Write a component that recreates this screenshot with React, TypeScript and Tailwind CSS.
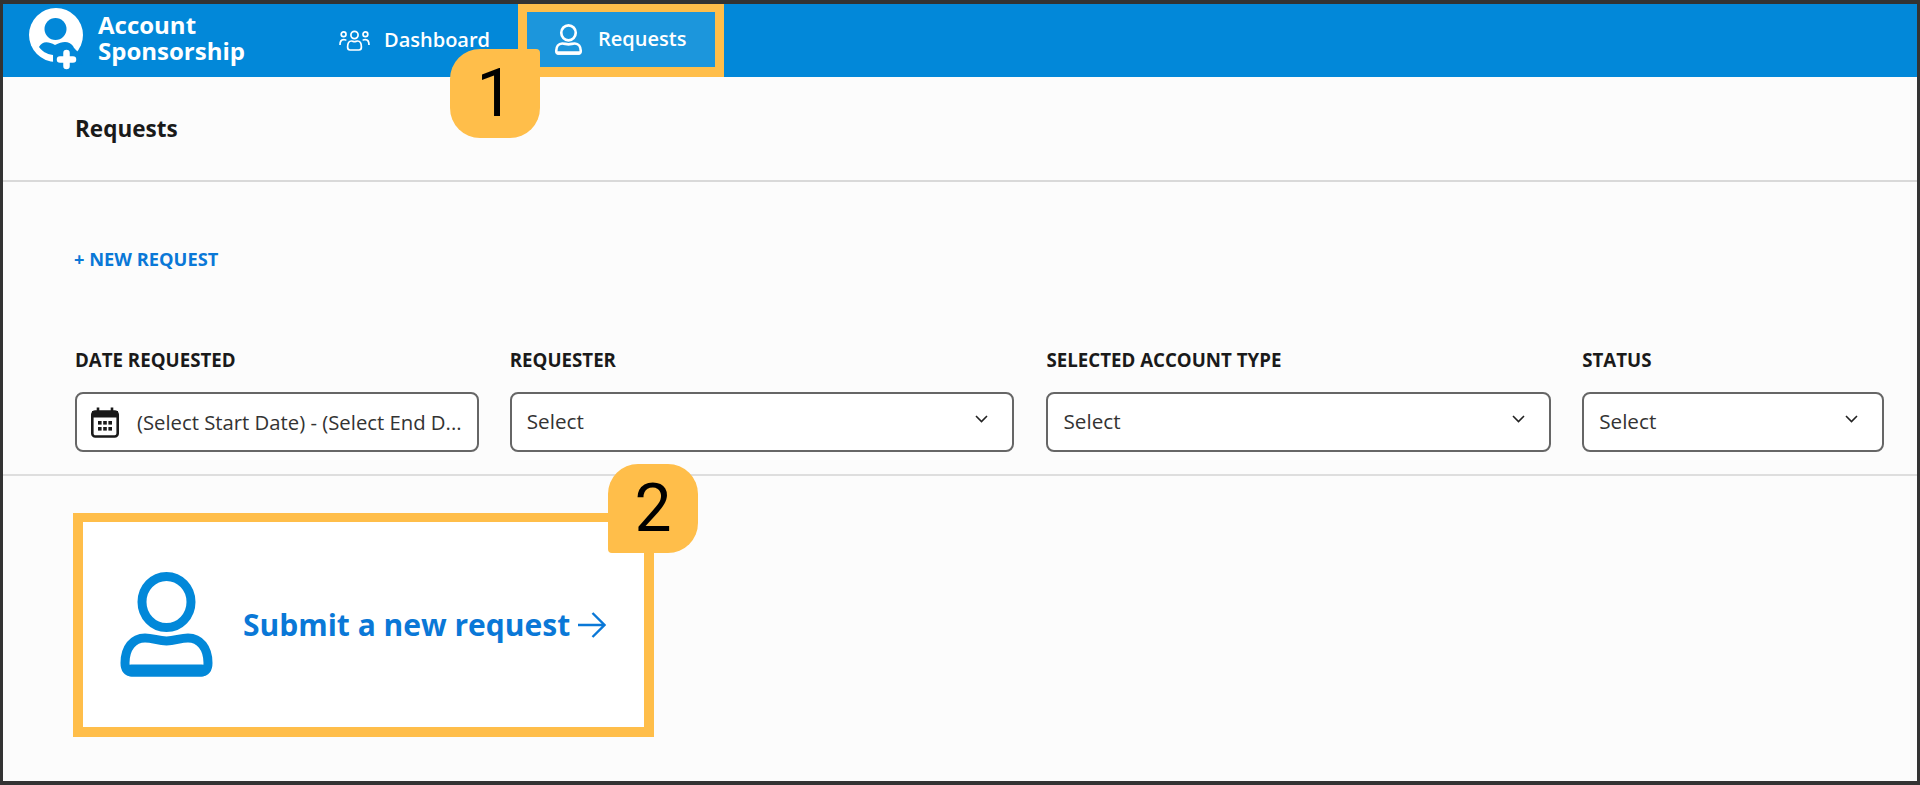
const sans = "font-['Open_Sans',sans-serif]";

// same outline figure is used in the nav tab and in the big card
const PersonIcon = ({ className }: { className: string }) => (
  <svg viewBox="0 0 93 105" fill="none" stroke="currentColor" strokeWidth="9" className={className}>
    <ellipse cx="46.5" cy="30" rx="24.5" ry="25.5" />
    <path d="M5 91 C5 76 13 66 25 66 C33 66 38 69 46.5 69 C55 69 60 66 68 66 C80 66 88 76 88 91 Q88 100 81 100 L12 100 Q5 100 5 91 Z" />
    <path d="M11 98.5 H82" strokeWidth="12" strokeLinecap="round" />
  </svg>
);

const Logo = () => (
  <svg viewBox="0 0 70 70" className="mb-[3px] h-[70px] w-[70px]">
    <circle cx="36" cy="31" r="27" fill="#fff" />
    <circle cx="35.5" cy="25" r="11" fill="#0288d9" />
    <path d="M19 43 C22 37 28 37 35 41 C43 37 49 37 53 42 L62 60 L34 66 L33 51 C26 50 22 47 19 43 Z" fill="#0288d9" />
    <circle cx="46.5" cy="55.5" r="13.5" fill="#0288d9" />
    <path d="M46.5 49 V62 M40 55.5 H53" stroke="#fff" strokeWidth="6.5" strokeLinecap="round" />
  </svg>
);

const GroupIcon = () => (
  <svg viewBox="0 0 31 21" fill="none" stroke="#fff" strokeWidth="1.7" className="h-[21px] w-[31px]">
    <circle cx="15.5" cy="5" r="3.6" />
    <circle cx="4.6" cy="4.2" r="2.4" />
    <circle cx="26.4" cy="4.2" r="2.4" />
    <path d="M8.6 17 C8.6 13 10.5 11 12.5 11 C13.6 11 14.4 11.7 15.5 11.7 C16.6 11.7 17.4 11 18.5 11 C20.5 11 22.4 13 22.4 17 Q22.4 20 20 20 L11 20 Q8.6 20 8.6 17 Z" />
    <path d="M1 15 C1 11.5 2.5 9.6 4.5 9.6 C5.5 9.6 6.3 10 7.4 10" />
    <path d="M30 15 C30 11.5 28.5 9.6 26.5 9.6 C25.5 9.6 24.7 10 23.6 10" />
  </svg>
);

const CalendarIcon = () => (
  <svg viewBox="0 0 28 31" className="h-[31px] w-[28px] shrink-0">
    <path d="M7 0.5 V6 M21 0.5 V6" stroke="#1a1a1a" strokeWidth="2.6" />
    <rect x="1.3" y="4.5" width="25.4" height="25" rx="3" fill="none" stroke="#1a1a1a" strokeWidth="2.6" />
    <rect x="1" y="4" width="26" height="6.5" fill="#1a1a1a" />
    <g fill="#1a1a1a">
      <rect x="7" y="14" width="3.6" height="3.6" />
      <rect x="12.2" y="14" width="3.6" height="3.6" />
      <rect x="17.4" y="14" width="3.6" height="3.6" />
      <rect x="7" y="20" width="3.6" height="3.6" />
      <rect x="12.2" y="20" width="3.6" height="3.6" />
      <rect x="17.4" y="20" width="3.6" height="3.6" />
    </g>
  </svg>
);

const Badge = ({ n, className }: { n: string; className: string }) => (
  <div
    className={`absolute z-10 flex h-[89px] w-[90px] items-center justify-center bg-[#ffbe4a] font-['Roboto',sans-serif] text-[66px] leading-none text-black ${className}`}
  >
    {n}
  </div>
);

const SelectBox = ({ label, width }: { label: string; width: string }) => (
  <div className={width}>
    <div className="mb-[20px] text-[18.7px] leading-[24px] font-bold text-[#1a1a1a]">{label}</div>
    <div className="flex h-[60px] items-center justify-between rounded-[8px] border-2 border-[#666] bg-white pr-[24px] pl-[15px]">
      <span className="mb-[2px] text-[20.7px] leading-[28px] font-medium text-[#333]">Select</span>
      <svg viewBox="0 0 13 8" fill="none" stroke="#222" strokeWidth="1.6" className="mb-[6px] h-[8px] w-[13px]">
        <path d="M1 1 L6.5 6.5 L12 1" />
      </svg>
    </div>
  </div>
);

export default function App() {
  return (
    <div className={`${sans} flex h-[785px] w-[1920px] flex-col overflow-hidden border-x-[3px] border-t-[4px] border-b-[4px] border-[#333] bg-[#fcfcfc]`}>
      <header className="flex h-[73px] shrink-0 items-stretch bg-[#0288d9] text-white">
        <div className="ml-[17px] flex w-[300px] items-center">
          <Logo />
          <div className="mb-[5px] ml-[8px] text-[24px] leading-[26px] font-bold">
            Account
            <br />
            Sponsorship
          </div>
        </div>
        <div className="ml-[19px] flex items-center">
          <GroupIcon />
          <span className="mb-[2px] ml-[14px] text-[20px] font-semibold">Dashboard</span>
        </div>
        <div className="relative ml-[28px] flex w-[206px] items-center border-t-[8px] border-r-[9px] border-b-[10px] border-l-[9px] border-[#ffbe4a] bg-[#1c96dc] pl-[27px]">
          <PersonIcon className="h-[31px] w-[29px]" />
          <span className="mb-[2px] ml-[15px] text-[20px] font-semibold">Requests</span>
          <Badge n="1" className="top-[37px] left-[-77px] rounded-[30px] rounded-tr-[4px]" />
        </div>
      </header>

      <div className="flex h-[105px] shrink-0 items-center border-b-2 border-[#d9d9d9] pl-[72px]">
        <h1 className="text-[22.5px] font-bold text-[#1a1a1a]">Requests</h1>
      </div>

      <div className="px-[71px] pt-[65px] text-[18.3px] leading-[24px] font-bold text-[#0a78d7]">+ NEW REQUEST</div>

      <div className="mt-[77px] flex gap-[31px] pr-[33px] pl-[72px]">
        <div className="w-[404px]">
          <div className="mb-[20px] text-[18.7px] leading-[24px] font-bold text-[#1a1a1a]">DATE REQUESTED</div>
          <div className="flex h-[60px] items-center gap-[18px] rounded-[8px] border-2 border-[#666] bg-white pl-[14px]">
            <CalendarIcon />
            <span className="text-[20.3px] leading-[28px] whitespace-nowrap text-[#333]">(Select Start Date) - (Select End D...</span>
          </div>
        </div>
        <SelectBox label="REQUESTER" width="w-[505px]" />
        <SelectBox label="SELECTED ACCOUNT TYPE" width="ml-[1px] w-[505px]" />
        <SelectBox label="STATUS" width="w-[302px]" />
      </div>

      <div className="mt-[22px] h-[2px] shrink-0 bg-[#dedede]" />

      <div className="relative mt-[37px] ml-[70px] flex h-[224px] w-[581px] items-center border-t-[9px] border-r-[10px] border-b-[10px] border-l-[10px] border-[#ffbe4a] bg-white pl-[37px]">
        <PersonIcon className="h-[105px] w-[93px] text-[#0288d9]" />
        <span className="ml-[30px] text-[30px] font-bold text-[#0a78d7]">Submit a new request</span>
        <svg viewBox="0 0 28 26" fill="none" stroke="#0a78d7" strokeWidth="2.4" className="ml-[8px] h-[26px] w-[28px]">
          <path d="M0 13 H26 M14.5 1 L26.5 13 L14.5 25" />
        </svg>
        <Badge n="2" className="top-[-58px] right-[-54px] rounded-[30px] rounded-bl-[4px]" />
      </div>
    </div>
  );
}
